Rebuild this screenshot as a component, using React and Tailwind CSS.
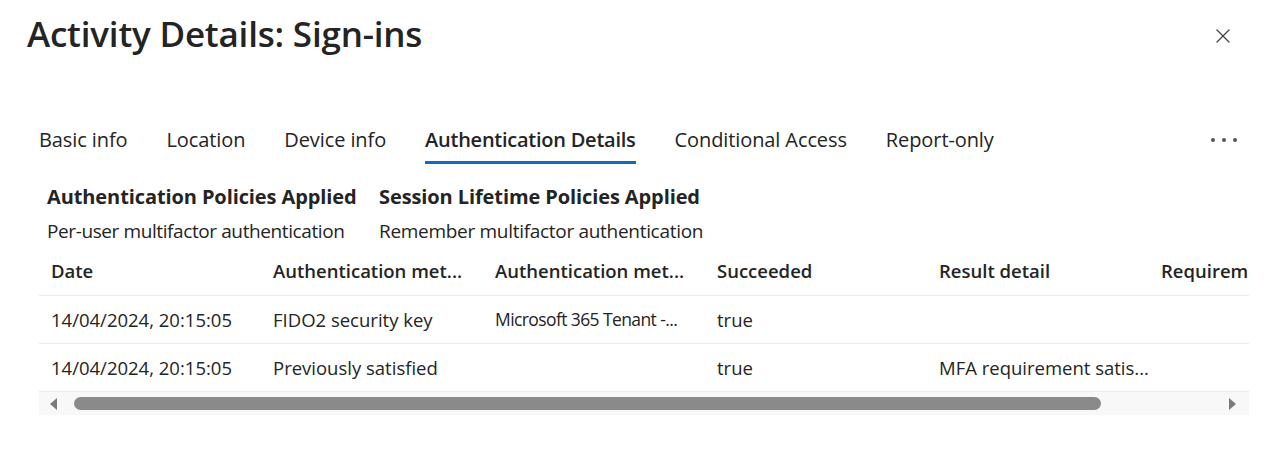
import { X } from 'lucide-react'

const TABS = ['Basic info', 'Location', 'Device info', 'Authentication Details', 'Conditional Access', 'Report-only']

const COLUMNS = ['Date', 'Authentication met...', 'Authentication met...', 'Succeeded', 'Result detail', 'Requirement']

const ROWS = [
  ['14/04/2024, 20:15:05', 'FIDO2 security key', 'Microsoft 365 Tenant -...', 'true', '', ''],
  ['14/04/2024, 20:15:05', 'Previously satisfied', '', 'true', 'MFA requirement satis...', ''],
]

function App() {
  return (
    <div className="w-full h-[471px] bg-white text-[#242424] overflow-hidden" style={{ fontFamily: '"Open Sans", "Noto Sans", sans-serif' }}>
      {/* Header */}
      <div className="flex items-start justify-between pl-[27px] pr-[44px] pt-[10px]">
        <h1 className="text-[35px] font-semibold leading-[48px] tracking-[-0.2px]">Activity Details: Sign-ins</h1>
        <button className="mt-[14px] text-[#424242]">
          <X size={24} strokeWidth={1.3} />
        </button>
      </div>

      {/* Tabs */}
      <div className="flex items-center justify-between pl-[39px] pr-[42px] mt-[63px]">
        <div className="flex gap-[39px]">
          {TABS.map((t, i) => (
            <div key={t} className="relative h-[37px] flex items-center">
              <span className={`text-[20px] ${i === 3 ? 'font-semibold tracking-[-0.25px]' : 'tracking-[-0.1px]'}`}>{t}</span>
              {i === 3 && <div className="absolute left-0 right-0 bottom-[-6px] h-[3px] bg-[#0f6cbd]" />}
            </div>
          ))}
        </div>
        <div className="flex gap-[7px] items-center">
          <span className="w-[4px] h-[4px] rounded-full bg-[#555]" />
          <span className="w-[4px] h-[4px] rounded-full bg-[#555]" />
          <span className="w-[4px] h-[4px] rounded-full bg-[#555]" />
        </div>
      </div>

      {/* Policies */}
      <div className="flex pl-[47px] mt-[25px]">
        <div className="w-[332px] flex flex-col gap-[6px]">
          <span className="text-[20px] font-bold leading-[28px] tracking-[-0.1px]">Authentication Policies Applied</span>
          <span className="text-[19px] tracking-[-0.4px] leading-[28px]">Per-user multifactor authentication</span>
        </div>
        <div className="flex flex-col gap-[6px]">
          <span className="text-[20px] font-bold leading-[28px] tracking-[-0.1px]">Session Lifetime Policies Applied</span>
          <span className="text-[19px] tracking-[-0.3px] leading-[28px]">Remember multifactor authentication</span>
        </div>
      </div>

      {/* Table */}
      <div className="ml-[39px] w-[1210px] mt-[1px] overflow-hidden">
        <div className="flex h-[50px] items-center border-b border-[#ebebeb]">
          {COLUMNS.map((c, i) => (
            <div key={i} className="w-[222px] shrink-0 pl-[12px] text-[18.5px] font-semibold whitespace-nowrap">{c}</div>
          ))}
        </div>
        {ROWS.map((r, ri) => (
          <div key={ri} className="flex h-[48px] items-center border-b border-[#ebebeb]">
            {r.map((c, i) => (
              <div key={i} className={`w-[222px] shrink-0 pl-[12px] whitespace-nowrap overflow-hidden ${i === 2 ? 'text-[17.5px] tracking-[-0.6px]' : 'text-[18.5px]'}`}>{c}</div>
            ))}
          </div>
        ))}
        {/* Scrollbar */}
        <div className="flex items-center h-[23px] bg-[#f8f8f8] pl-[11px] pr-[13px] gap-[16px]">
          <svg width="8" height="12" viewBox="0 0 8 12"><path d="M7 0 L0 6 L7 12 Z" fill="#7a7a7a" /></svg>
          <div className="h-[13px] w-[1027px] rounded-full bg-[#8a8a8a]" />
          <div className="flex-1" />
          <svg width="8" height="12" viewBox="0 0 8 12"><path d="M1 0 L8 6 L1 12 Z" fill="#7a7a7a" /></svg>
        </div>
      </div>
    </div>
  )
}

export default App
